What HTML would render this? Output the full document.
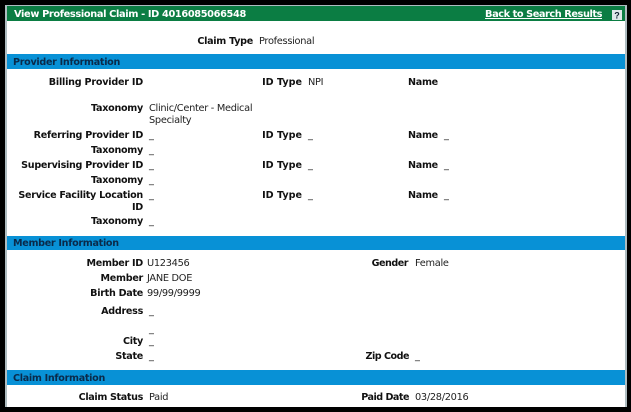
<!DOCTYPE html>
<html><head><meta charset="utf-8">
<style>
html,body{margin:0;padding:0;width:631px;height:412px;overflow:hidden;background:#000}
#f{position:absolute;left:5px;top:5px;width:622px;height:402px;background:#fff;border-left:2px solid #aebcc0;border-right:2px solid #aebcc0;border-top:1px solid #aebcc0;box-sizing:border-box;overflow:hidden}
#p{position:absolute;left:0;top:1px;width:631px;height:411px;font-family:"DejaVu Sans","Liberation Sans",sans-serif;font-size:9.5px;color:#333;filter:blur(0.3px)}
.b{position:absolute;left:7px;width:618px}
.l,.v,.h,.w{position:absolute;line-height:12px;white-space:nowrap}
.l{font-weight:bold;color:#111;text-align:right;font-size:9.6px;letter-spacing:-.28px}
.t{letter-spacing:0}
.z{letter-spacing:-.5px}
.v{font-size:9.8px;letter-spacing:-.3px;color:#222}
.h{font-weight:bold;left:13px;color:#0a2a4a;font-size:9.6px;letter-spacing:-.3px}
.w{color:#fff;font-weight:bold;font-size:9.8px}
</style></head><body>
<div id="f"></div>
<div class="b" style="top:6px;height:15px;background:#0b7d43"></div>
<div class="b" style="top:54px;height:15px;background:#0891d6"></div>
<div class="b" style="top:236px;height:14px;background:#0891d6"></div>
<div class="b" style="top:370px;height:15px;background:#0891d6"></div>
<div id="p">
<span class="w" style="left:14px;top:8px;letter-spacing:-.36px">View Professional Claim - ID 4016085066548</span>
<span class="w" style="right:29px;top:8px;letter-spacing:-.45px;text-decoration:underline">Back to Search Results</span>
<svg style="position:absolute;left:612px;top:9px" width="10" height="10"><rect width="10" height="10" fill="#dfe8ea"/><text x="5" y="8.5" text-anchor="middle" font-size="9" font-weight="bold" font-family="Liberation Sans" fill="#123">?</text></svg>

<span class="l" style="right:378px;top:35px">Claim Type</span><span class="v" style="left:259px;top:35px">Professional</span>
<span class="h" style="top:56px">Provider Information</span>

<span class="l" style="right:488px;top:76px;letter-spacing:-.22px">Billing Provider ID</span>
<span class="l t" style="right:329px;top:76px">ID Type</span><span class="v" style="left:308px;top:76px">NPI</span>
<span class="l" style="left:408px;top:76px">Name</span>

<span class="l" style="right:488px;top:102px">Taxonomy</span>
<span class="v" style="left:149px;top:102px">Clinic/Center - Medical</span>
<span class="v" style="left:149px;top:114px">Specialty</span>

<span class="l" style="right:488px;top:129px">Referring Provider ID</span><span class="v" style="left:149px;top:129px">_</span>
<span class="l t" style="right:329px;top:129px">ID Type</span><span class="v" style="left:308px;top:129px">_</span>
<span class="l" style="left:408px;top:129px">Name</span><span class="v" style="left:444px;top:129px">_</span>

<span class="l" style="right:488px;top:144px">Taxonomy</span><span class="v" style="left:149px;top:144px">_</span>

<span class="l" style="right:488px;top:159px">Supervising Provider ID</span><span class="v" style="left:149px;top:159px">_</span>
<span class="l t" style="right:329px;top:159px">ID Type</span><span class="v" style="left:308px;top:159px">_</span>
<span class="l" style="left:408px;top:159px">Name</span><span class="v" style="left:444px;top:159px">_</span>

<span class="l" style="right:488px;top:174px">Taxonomy</span><span class="v" style="left:149px;top:174px">_</span>

<span class="l" style="right:488px;top:189px">Service Facility Location</span><span class="v" style="left:149px;top:189px">_</span>
<span class="l t" style="right:329px;top:189px">ID Type</span><span class="v" style="left:308px;top:189px">_</span>
<span class="l" style="left:408px;top:189px">Name</span><span class="v" style="left:444px;top:189px">_</span>
<span class="l" style="right:488px;top:201px">ID</span>

<span class="l" style="right:488px;top:215px">Taxonomy</span><span class="v" style="left:149px;top:215px">_</span>

<span class="h" style="top:237px">Member Information</span>

<span class="l" style="right:488px;top:257px">Member ID</span><span class="v" style="left:147px;top:257px">U123456</span>
<span class="l z" style="right:223px;top:257px">Gender</span><span class="v" style="left:415px;top:257px">Female</span>
<span class="l" style="right:488px;top:272px">Member</span><span class="v" style="left:147px;top:272px">JANE DOE</span>
<span class="l" style="right:488px;top:287px">Birth Date</span><span class="v" style="left:147px;top:287px">99/99/9999</span>
<span class="l" style="right:488px;top:305px">Address</span><span class="v" style="left:149px;top:305px">_</span>
<span class="v" style="left:149px;top:323px">_</span>
<span class="l" style="right:488px;top:335px">City</span><span class="v" style="left:149px;top:335px">_</span>
<span class="l" style="right:488px;top:350px">State</span><span class="v" style="left:149px;top:350px">_</span>
<span class="l z" style="right:222px;top:350px">Zip Code</span><span class="v" style="left:415px;top:350px">_</span>

<span class="h" style="top:372px">Claim Information</span>

<span class="l" style="right:488px;top:391px;letter-spacing:-.35px">Claim Status</span><span class="v" style="left:149px;top:391px">Paid</span>
<span class="l z" style="right:222px;top:391px">Paid Date</span><span class="v" style="left:415px;top:391px">03/28/2016</span>
</div>
</body></html>
